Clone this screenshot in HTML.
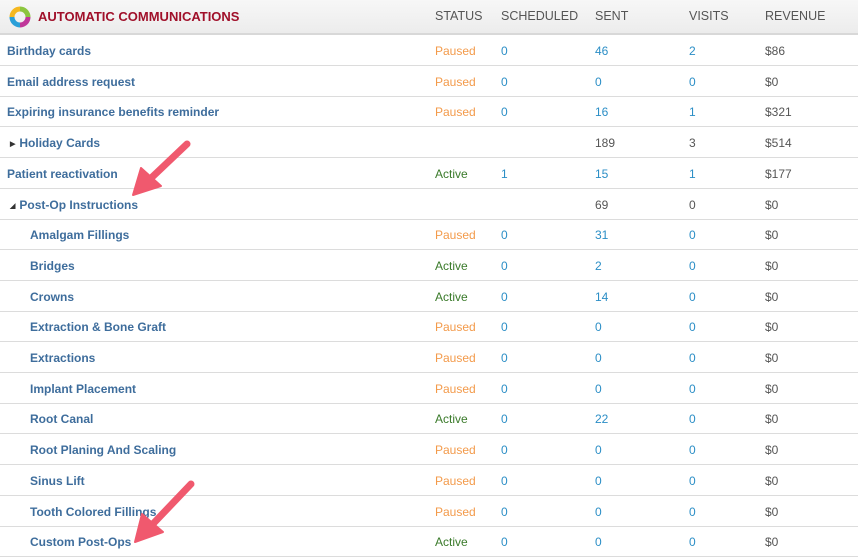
<!DOCTYPE html><html><head><style>
body{margin:0;width:858px;height:558px;overflow:hidden;background:#fff;font-family:"Liberation Sans",Arial,sans-serif;font-size:12px;position:relative}
.hd{position:absolute;left:0;top:0;width:858px;height:35px;background:linear-gradient(#f7f7f7,#ececec);border-bottom:2px solid #d8d8d8;box-sizing:border-box}
.hd span{position:absolute;top:9px;color:#555;font-size:12.5px}
.hd .t{left:38px;top:9px;color:#a0102a;font-weight:bold;font-size:13px}
.r{position:absolute;left:0;width:858px;height:31px;border-bottom:1px solid #dcdcdc;box-sizing:border-box}
.r span{position:absolute;top:9px}
.n{color:#3e6d9c;font-weight:bold}
.p{color:#f39a4a}.a{color:#3a7a2a}.b{color:#2b8ec6}.g{color:#555}
.r span.tri{position:static;font-size:7px;color:#333;vertical-align:1px;margin-right:4px}
</style></head><body>
<div class="hd">
<svg style="position:absolute;left:9px;top:6px" width="22" height="22" viewBox="0 0 22 22"><path d="M11 3 A8 8 0 0 1 19 11" fill="none" stroke="#8cc63f" stroke-width="5"/><path d="M19 11 A8 8 0 0 1 11 19" fill="none" stroke="#c0369a" stroke-width="5"/><path d="M11 19 A8 8 0 0 1 3 11" fill="none" stroke="#2a9fd8" stroke-width="5"/><path d="M3 11 A8 8 0 0 1 11 3" fill="none" stroke="#f5b820" stroke-width="5"/></svg>
<span class="t">AUTOMATIC COMMUNICATIONS</span>
<span style="left:435px">STATUS</span><span style="left:501px">SCHEDULED</span><span style="left:595px">SENT</span><span style="left:689px">VISITS</span><span style="left:765px">REVENUE</span>
</div>
<div id="rows"></div>
<script>
var d=[["Birthday cards",7,"Paused","0","46","2","$86"],["Email address request",7,"Paused","0","0","0","$0"],["Expiring insurance benefits reminder",7,"Paused","0","16","1","$321"],["▸ Holiday Cards",10,"","","189","3","$514"],["Patient reactivation",7,"Active","1","15","1","$177"],["◢ Post-Op Instructions",10,"","","69","0","$0"],["Amalgam Fillings",30,"Paused","0","31","0","$0"],["Bridges",30,"Active","0","2","0","$0"],["Crowns",30,"Active","0","14","0","$0"],["Extraction &amp; Bone Graft",30,"Paused","0","0","0","$0"],["Extractions",30,"Paused","0","0","0","$0"],["Implant Placement",30,"Paused","0","0","0","$0"],["Root Canal",30,"Active","0","22","0","$0"],["Root Planing And Scaling",30,"Paused","0","0","0","$0"],["Sinus Lift",30,"Paused","0","0","0","$0"],["Tooth Colored Fillings",30,"Paused","0","0","0","$0"],["Custom Post-Ops",30,"Active","0","0","0","$0"]];
var h="";d.forEach(function(r,i){var top=35+i*30.7;var nm=r[0].replace("▸ ",'<span class="tri">▶</span>').replace("◢ ",'<span class="tri">◢</span>');
var gray=r[2]==""?"g":"b";
h+='<div class="r" style="top:'+top+'px"><span class="n" style="left:'+r[1]+'px">'+nm+'</span><span class="'+(r[2]=="Active"?"a":"p")+'" style="left:435px">'+r[2]+'</span><span class="b" style="left:501px">'+r[3]+'</span><span class="'+gray+'" style="left:595px">'+r[4]+'</span><span class="'+gray+'" style="left:689px">'+r[5]+'</span><span class="g" style="left:765px">'+r[6]+'</span></div>';});
document.getElementById("rows").innerHTML=h;
</script>
<svg style="position:absolute;left:0;top:0" width="858" height="558">
<g fill="#f0596e" stroke="#f0596e" stroke-linecap="round">
<line x1="187" y1="144" x2="148" y2="181" stroke-width="7"/><polygon points="133,195 141,168 161,186" stroke-width="2" stroke-linejoin="round"/>
<line x1="191" y1="484" x2="150" y2="527" stroke-width="7"/><polygon points="135,542 142,514 163,532" stroke-width="2" stroke-linejoin="round"/>
</g></svg>
</body></html>
